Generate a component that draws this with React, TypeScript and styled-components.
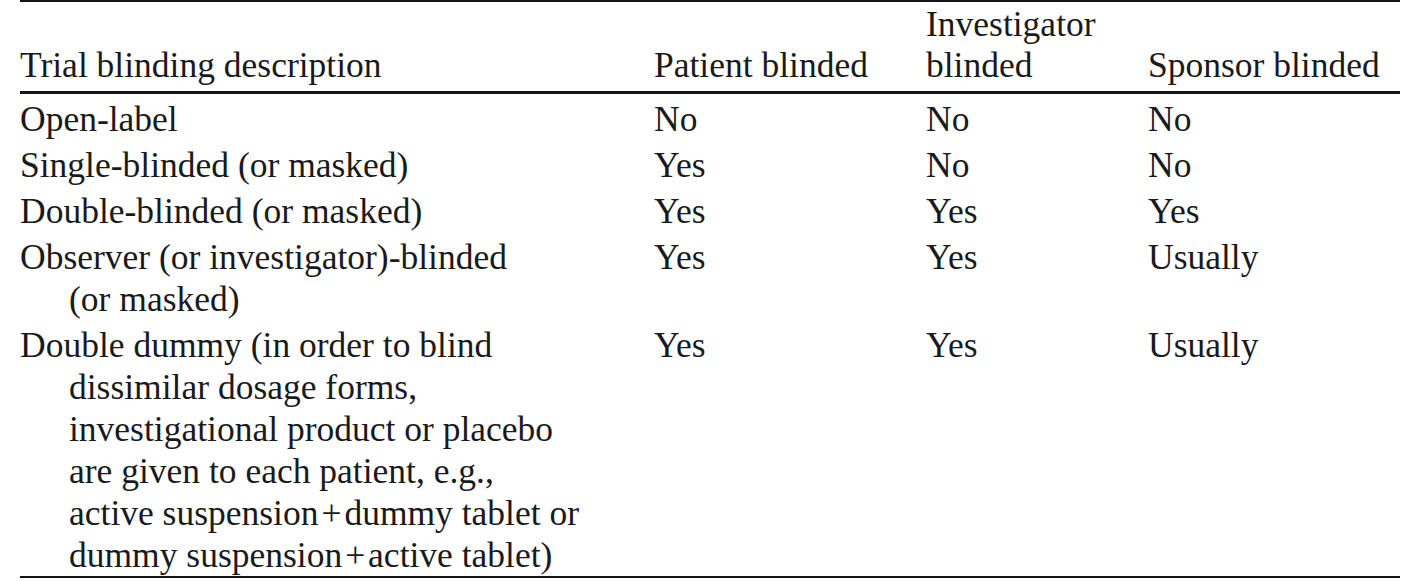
import React from "react";
import styled, { createGlobalStyle } from "styled-components";

const GlobalStyle = createGlobalStyle`
  html, body {
    margin: 0;
    padding: 0;
    background: #ffffff;
  }
  body {
    font-family: "Liberation Serif", "Times New Roman", serif;
    color: #1a1a1a;
  }
`;

const Page = styled.div`
  padding-left: 20px;
  width: 1380px;
`;

const Table = styled.div`
  display: grid;
  grid-template-columns: 634px 272px 222px 252px;
  border-top: 2px solid #141414;
  border-bottom: 2px solid #141414;
  font-size: 35.5px;
`;

const HeaderCell = styled.div`
  display: flex;
  flex-direction: column;
  justify-content: flex-end;
  line-height: 41px;
  padding: 2px 0 5px;
  border-bottom: 3px solid #141414;
  white-space: nowrap;
`;

const Cell = styled.div`
  line-height: 42px;
  padding-top: 4px;
  white-space: nowrap;
`;

const Line = styled.div<{ $hang?: boolean }>`
  padding-left: ${(p) => (p.$hang ? "49px" : "0")};
`;

type Row = {
  desc: string[];
  patient: string;
  investigator: string;
  sponsor: string;
};

const rows: Row[] = [
  { desc: ["Open-label"], patient: "No", investigator: "No", sponsor: "No" },
  { desc: ["Single-blinded (or masked)"], patient: "Yes", investigator: "No", sponsor: "No" },
  { desc: ["Double-blinded (or masked)"], patient: "Yes", investigator: "Yes", sponsor: "Yes" },
  {
    desc: ["Observer (or investigator)-blinded", "(or masked)"],
    patient: "Yes",
    investigator: "Yes",
    sponsor: "Usually",
  },
  {
    desc: [
      "Double dummy (in order to blind",
      "dissimilar dosage forms,",
      "investigational product or placebo",
      "are given to each patient, e.g.,",
      "active suspension\u200A+\u200Adummy tablet or",
      "dummy suspension\u200A+\u200Aactive tablet)",
    ],
    patient: "Yes",
    investigator: "Yes",
    sponsor: "Usually",
  },
];

export default function App() {
  return (
    <Page>
      <GlobalStyle />
      <Table>
        <HeaderCell>
          <Line>Trial blinding description</Line>
        </HeaderCell>
        <HeaderCell>
          <Line>Patient blinded</Line>
        </HeaderCell>
        <HeaderCell>
          <Line>Investigator</Line>
          <Line>blinded</Line>
        </HeaderCell>
        <HeaderCell>
          <Line>Sponsor blinded</Line>
        </HeaderCell>
        {rows.map((r, i) => (
          <React.Fragment key={i}>
            <Cell>
              {r.desc.map((d, j) => (
                <Line key={j} $hang={j > 0}>
                  {d}
                </Line>
              ))}
            </Cell>
            <Cell>{r.patient}</Cell>
            <Cell>{r.investigator}</Cell>
            <Cell>{r.sponsor}</Cell>
          </React.Fragment>
        ))}
      </Table>
    </Page>
  );
}
